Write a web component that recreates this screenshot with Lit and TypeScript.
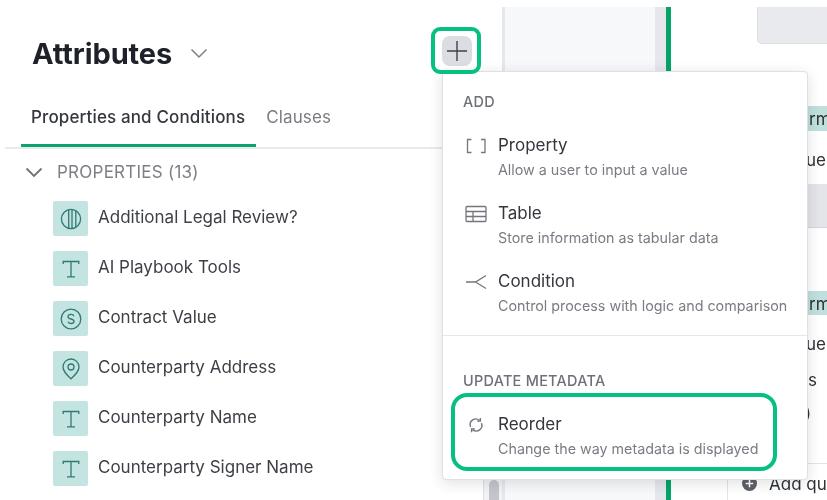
import { LitElement, html, css, svg } from "lit";
import { customElement } from "lit/decorators.js";

const I = {
  bool: svg`<circle cx="12" cy="12" r="9.600"/><path d="M9.700 2.700v18.600M13 2.400v19.200M16.800 3.600v16.800"/>`,
  text: svg`<path d="M4.200 7V4.500h15.600V7M12 4.500v15M8 19.800h8"/>`,
  money: svg`<circle cx="12" cy="12" r="9.800"/><path d="M15 9.200c-.4-1.200-1.500-1.800-3-1.800-1.700 0-3 .9-3 2.300 0 3 6 1.600 6 4.500 0 1.400-1.300 2.300-3 2.300-1.500 0-2.600-.7-3-1.900"/>`,
  pin: svg`<path d="M12 21.800C7.500 17.500 4 14.200 4 10a8 8 0 0 1 16 0c0 4.200-3.500 7.500-8 11.800z"/><circle cx="12" cy="10" r="3"/>`,
};
const P: [any, string][] = [
  [I.bool, "Additional Legal Review?"],
  [I.text, "AI Playbook Tools"],
  [I.money, "Contract Value"],
  [I.pin, "Counterparty Address"],
  [I.text, "Counterparty Name"],
  [I.text, "Counterparty Signer Name"],
];
const M = {
  prop: svg`<path d="M7.500 5.500H3.500v13h4M17 5.500h4v13h-4"/>`,
  table: svg`<rect x="2" y="4.500" width="20" height="15" rx="1"/><path d="M2 9.500h20M2 14.500h20M9 9.500v10"/>`,
  cond: svg`<path d="M2 12h9.500L22 5.500M11.500 12 22 18.500"/>`,
  sync: svg`<path d="M4.800 14.500A7.500 7.500 0 0 1 16.500 5.800M19.200 9.500A7.500 7.500 0 0 1 7.500 18.200"/><path d="M17.800 2.500v4.300H13.500M6.200 21.500v-4.300H10.500"/>`,
};
const chevron = svg`<path d="M1.500 1.500 9 9l7.500-7.500"/>`;

@customElement("app-root")
export class AppRoot extends LitElement {
  static styles = css`
    :host { display: block; position: relative; width: 827px; height: 500px; overflow: hidden; background: #fff;
      font-family: Inter, "Liberation Sans", sans-serif; color: #34373d; filter: blur(0.35px); }
    .page { display: flex; height: 493px; margin-top: 7px; }
    .left { width: 505px; flex: none; box-sizing: border-box; border-right: 3px solid #e6e7ec; padding-left: 5px; position: relative; }
    .head { display: flex; align-items: center; height: 92px; padding: 1px 0 0 27px; box-sizing: border-box; gap: 18px; }
    h1 { margin: 0; font-size: 29px; line-height: 40px; font-weight: 700; color: #1d2129; letter-spacing: -0.1px; }
    .head svg { width: 18px; height: 11px; fill: none; stroke: #7c7f87; stroke-width: 1.500; }
    .tabs { display: flex; height: 50px; border-bottom: 2px solid #e9e9ee; box-sizing: border-box; padding-left: 16px; }
    .tab { height: 48px; box-sizing: border-box; padding: 8px 11px 0 10px; font-size: 17px; line-height: 20px; color: #7a7c84; letter-spacing: .13px; }
    .tab.on { font-weight: 500; color: #34373d; border-bottom: 3px solid #0ba56b; }
    .sec { display: flex; align-items: center; gap: 14px; height: 46px; margin-bottom: 6px; padding-left: 20px; font-size: 17px; letter-spacing: .25px; color: #7c7f87; }
    .sec svg { width: 18px; height: 11px; fill: none; stroke: #6e7178; stroke-width: 1.800; }
    .row { display: flex; align-items: center; gap: 10px; height: 35px; margin: 0 0 15px 48px; font-size: 17px; color: #3c3f45; }
    .badge { width: 35px; height: 35px; border-radius: 2px; background: #c4e4e1; display: flex; align-items: center; justify-content: center; }
    .badge svg { width: 24px; height: 24px; fill: none; stroke: #2f7a72; stroke-width: 1.300; }
    .row span { position: relative; top: -2px; }
    .mid { width: 150px; flex: none; background: #f7f8fa; }
    .rail { width: 11px; flex: none; background: #e6e7ec; }
    .green { width: 5px; flex: none; background: #04a468; }
    .right { flex: 1; display: flex; flex-direction: column; font-size: 17px; color: #2f3237; padding-left: 56px; position: relative; }
    .stub { height: 37px; margin-left: 30px; background: #e9eaed; border: 1px solid #dcdde2; border-top: 0; border-right: 0; border-radius: 0 0 0 5px; box-sizing: border-box; }
    .tl { height: 25px; margin-top: 62px; background: #bfe0dc; padding-left: 82px; line-height: 26px; }
    .ln { height: 24px; line-height: 24px; padding-left: 79px; }
    .ln.g17 { margin-top: 17px; }
    .ln.s { margin-top: 12px; padding-left: 81px; }
    .ln.p { margin-top: 9px; padding-left: 78px; }
    .band { height: 44px; background: #e4e5e9; margin-top: 12px; border-bottom: 1px solid #d6d7dc; box-sizing: border-box; }
    .tl2 { margin-top: 63px; height: 24px; }
    .foot { position: absolute; left: 56px; right: 0; top: 456px; bottom: 0; border-top: 1px solid #e3e3e9; border-left: 1px solid #e3e3e9; display: flex; gap: 12px; align-items: center; padding: 3px 0 0 14px; }
    .foot svg { width: 15px; height: 15px; flex: none; }
    .track { position: absolute; left: 483px; top: 473px; width: 19px; height: 20px; border-left: 1px solid #dedfe4; background: #f3f3f5; box-sizing: border-box; }
    .thumb { position: absolute; left: 5px; top: 0; width: 10px; height: 26px; border-radius: 5px; background: #c4c5ca; }
    .menu { position: absolute; left: 442px; top: 71px; width: 366px; height: 409px; box-sizing: border-box; background: #fff; border: 1px solid #dfdfe5; border-radius: 4px; box-shadow: 0 3px 14px rgba(30,32,40,.14); display: flex; flex-direction: column; padding-top: 20px; }
    .lab { font-size: 14.4px; font-weight: 500; letter-spacing: .3px; color: #6d7077; line-height: 20px; padding-left: 20px; }
    .item { display: grid; grid-template-columns: 24px 1fr; grid-template-rows: 24px auto; column-gap: 11px; height: 68px; padding-left: 20px; align-content: start; }
    .item svg { width: 24px; height: 24px; fill: none; stroke: #74767d; stroke-width: 1.300; align-self: center; margin-left: 1px; }
    .item b { font-weight: 400; font-size: 17px; line-height: 22px; color: #33363c; }
    .item i { grid-column: 2; font-style: normal; font-size: 14.3px; line-height: 24px; color: #797c83; white-space: nowrap; }
    .items { display: flex; flex-direction: column; padding-top: 22px; }
    .sep { border-top: 1px solid #e6e6eb; margin-top: -3px; height: 36px; }
    .sm svg { width: 18px; height: 18px; margin-left: 4px; stroke-width: 1.900; }
    .last { margin-top: 22px; }
    .outline { position: absolute; box-sizing: border-box; border: 4px solid #06c07f; pointer-events: none; }
    .o1 { left: 431px; top: 27px; width: 50px; height: 47px; border-radius: 9px; }
    .o2 { left: 451px; top: 393px; width: 326px; height: 78px; border-radius: 16px; }
    .plus { position: absolute; left: 442px; top: 36px; width: 30px; height: 30px; border-radius: 8px; background: #dcdde3; display: flex; align-items: center; justify-content: center; }
    .plus svg { width: 20px; height: 20px; fill: none; stroke: #3f4248; stroke-width: 1.400; }
  `;

  render() {
    return html`
      <div class="page">
        <section class="left">
          <div class="head"><h1>Attributes</h1><svg viewBox="0 0 18 11">${chevron}</svg></div>
          <div class="tabs"><div class="tab on">Properties and Conditions</div><div class="tab">Clauses</div></div>
          <div class="sec"><svg viewBox="0 0 18 11">${chevron}</svg>PROPERTIES (13)</div>
          ${P.map(([ic, t]) => html`<div class="row"><div class="badge"><svg viewBox="0 0 24 24">${ic}</svg></div><span>${t}</span></div>`)}
          <div class="track"><div class="thumb"></div></div>
        </section>
        <div class="mid"></div>
        <div class="rail"></div>
        <div class="green"></div>
        <section class="right">
          <div class="stub"></div>
          <div class="tl">rm</div>
          <div class="ln g17">ue</div>
          <div class="band"></div>
          <div class="tl tl2">rm</div>
          <div class="ln g17">ue</div>
          <div class="ln s">s</div>
          <div class="ln p">)</div>
          <div class="foot"><svg viewBox="0 0 14 14"><circle cx="7" cy="7" r="7" fill="#5d6066"/><path d="M7 3.500v7M3.500 7h7" stroke="#fff" stroke-width="1.400"/></svg>Add qu</div>
        </section>
      </div>
      <div class="plus"><svg viewBox="0 0 20 20"><path d="M10 0v20M0 10h20"/></svg></div>
      <div class="menu">
        <div class="lab">ADD</div>
        <div class="items">
          <div class="item"><svg viewBox="0 0 24 24">${M.prop}</svg><b>Property</b><i>Allow a user to input a value</i></div>
          <div class="item"><svg viewBox="0 0 24 24">${M.table}</svg><b>Table</b><i>Store information as tabular data</i></div>
          <div class="item"><svg viewBox="0 0 24 24">${M.cond}</svg><b>Condition</b><i>Control process with logic and comparison</i></div>
        </div>
        <div class="sep"></div>
        <div class="lab">UPDATE METADATA</div>
        <div class="item sm last"><svg viewBox="0 0 24 24">${M.sync}</svg><b>Reorder</b><i>Change the way metadata is displayed</i></div>
      </div>
      <div class="outline o1"></div>
      <div class="outline o2"></div>
    `;
  }
}
